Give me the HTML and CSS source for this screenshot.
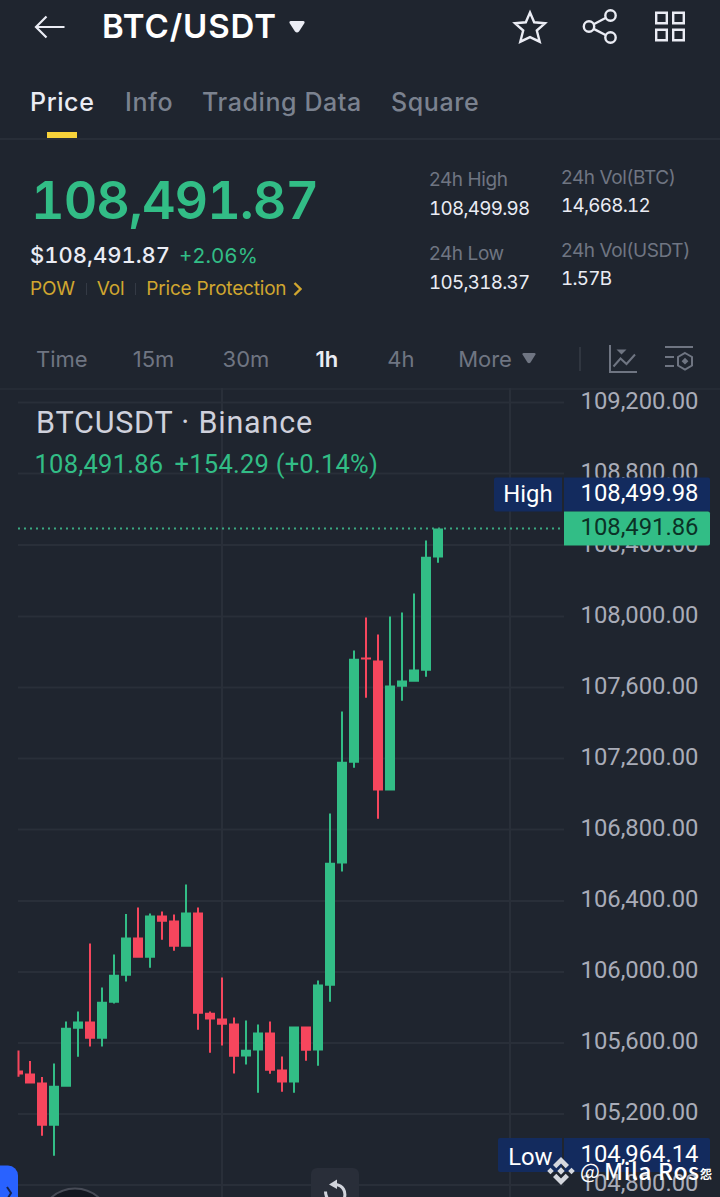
FILE: index.html
```
<!DOCTYPE html>
<html lang="en">
	<head>
		<meta charset="utf-8">
		<meta name="viewport" content="width=device-width, initial-scale=1.0">
		<title>BTC/USDT</title>
		<link rel="stylesheet" href="styles.css">
	</head>
	<body>
		<header class="topbar">
			<svg class="back" width="32" height="24" viewBox="0 0 32 24">
				<path d="M12.500 1.500L2 12l10.500 10.500M2 12h28.500"/>
			</svg>
			<h1>BTC/USDT</h1>
			<svg class="caret" width="16" height="12" viewBox="0 0 16 12">
				<path d="M2 0h12q2 0 1.500 2L10 10.500q-2 2-4 0L.5 2Q0 0 2 0z"/>
			</svg>
			<div class="actions">
				<svg width="36" height="36" viewBox="0 0 36 36">
					<path d="M18 3.500l4.200 9.800 10.800 1-8.200 7.200 2.900 11.200L18 28.100 8.300 32.700l2.900-11.200L3 14.300l10.800-1z"/>
				</svg>
				<svg width="36" height="36" viewBox="0 0 36 36">
					<circle cx="7" cy="17.500" r="5.200"/>
					<circle cx="28.500" cy="6.500" r="5.200"/>
					<circle cx="28.500" cy="28.500" r="5.200"/>
					<path d="M11.700 15.200L24 8.800M11.700 19.900l12.300 6.300"/>
				</svg>
				<svg width="36" height="36" viewBox="0 0 36 36">
					<path d="M4.200 3.700h10.600v10.600H4.200zM21.200 3.700h10.600v10.600H21.200zM4.200 20.700h10.600v10.600H4.200zM21.200 20.700h10.600v10.600H21.200z"/>
				</svg>
			</div>
		</header>
		<nav class="tabs">
			<a class="tab tab-price active">Price</a>
			<a class="tab tab-info">Info</a>
			<a class="tab tab-data">Trading Data</a>
			<a class="tab tab-square">Square</a>
		</nav>
		<section class="ticker">
			<div class="quote">
				<div class="last">108,491.87</div>
				<div class="fiat">$108,491.87 <span class="change">+2.06%</span></div>
				<div class="tags">
					<span class="tag">POW</span>
					<span class="tag">Vol</span>
					<span class="tag protection">Price Protection</span>
					<svg width="9" height="14" viewBox="0 0 9 14"><path d="M1.500 1l6 6-6 6"/></svg>
				</div>
			</div>
			<dl class="stats">
				<dt>24h High</dt>
				<dd>108,499.98</dd>
				<dt>24h Low</dt>
				<dd>105,318.37</dd>
			</dl>
			<dl class="stats volume">
				<dt>24h Vol(BTC)</dt>
				<dd>14,668.12</dd>
				<dt>24h Vol(USDT)</dt>
				<dd>1.57B</dd>
			</dl>
		</section>
		<nav class="intervals">
			<span class="i-time">Time</span>
			<span class="i-15m">15m</span>
			<span class="i-30m">30m</span>
			<span class="i-1h active">1h</span>
			<span class="i-4h">4h</span>
			<span class="i-more">More</span>
			<svg class="more-caret" width="14" height="11" viewBox="0 0 14 11">
				<path d="M1.500 0h11q1.500 0 1 1.500L8.500 9.500q-1.500 1.500-3 0L.5 1.500Q0 0 1.500 0z"/>
			</svg>
			<i class="divider"></i>
			<svg class="tool" width="30" height="30" viewBox="0 0 30 30">
				<path d="M2 1v27h27M5.500 22.500l7-8 6 5.500 8.500-9.500"/>
				<path class="solid" d="M8.500 5.500h10l-5 5z"/>
			</svg>
			<svg class="tool" width="30" height="30" viewBox="0 0 30 30">
				<path d="M1 3h28M1 13h9M1 22h9M21 9l7 4v8.500l-7 4-7-4V13z"/>
				<path class="solid" d="M21 13.800l3.400 3.400-3.400 3.400-3.400-3.400z"/>
			</svg>
		</nav>
		<main>
			<svg class="chart" width="720" height="809" viewBox="0 388 720 809">
				<path class="grid" d="M18 402.500H564M18 473.500H564M18 545H564M18 616.500H564M18 687.500H564M18 758.500H564M18 829.500H564M18 901H564M18 972H564M18 1043H564M18 1114H564M18 1185H564M222 388V1197M510 388V1197"/>

				<!-- candles, 12px apart -->
				<path class="wick up" d="M54 1063.500V1155.700M66 1021.500V1086M78 1011.500V1056.700M102 987.500V1046.500M114 954.500V1003.500M126 914V981.500M150 913.500V967.700M186 884.500V946M246 1020.500V1064.500M258 1024.500V1092.700M294 1027V1092.700M318 980.500V1065.700M330 813.500V1001.700M342 711.500V871.500M354 650.500V767.700M390 616.500V790M402 612.500V700.700M414 593.500V681M426 540.500V676.700M438 529V562.700"/>
				<path class="wick down" d="M18.500 1050.500V1076.700M30 1061V1083M42 1077V1135.700M90 943.500V1046.500M138 907.500V957M162 911.500V939.700M174 914.500V950.700M198 907.500V1029.700M210 1011.500V1052.700M222 977.500V1045.500M234 1017.500V1073.500M270 1021.500V1073.700M282 1056.500V1091.700M306 1027V1060.700M366 617.500V697.700M378 634.500V818.700"/>
				<path class="body up" d="M54 1085.700V1125.700M66 1027.700V1086.700M78 1021.500V1028.700M102 1001.700V1038.700M114 974.700V1002.700M126 937.500V975.700M150 915.500V957.700M186 912.500V946.700M246 1049.700V1056.500M258 1032.500V1050.500M294 1026.500V1082.500M318 984.500V1050.500M330 862.700V985.700M342 761.700V863.500M354 658.700V762.700M390 685.500V790.500M402 680.500V686.700M414 669.500V681.700M426 556.700V670.700M438 528.500V557.500"/>
				<path class="body down" d="M30 1073.500V1083.500M42 1082.500V1125.700M90 1021.500V1038.700M138 937.500V957.700M162 915.500V921.700M174 920.500V946.700M198 912.500V1013.700M210 1012.700V1019.500M222 1018.500V1024.700M234 1023.500V1056.700M270 1032.500V1070.700M282 1069.500V1082.500M306 1026.500V1050.700M366 657.500V659.500M378 660.500V790.500"/>
				<path class="body half down" d="M20.500 1070.500V1074.500"/>
				<path class="last-line" d="M18 528.500H562"/>

				<text class="symbol" x="36" y="432.500">BTCUSDT · Binance</text>
				<text class="ohlc" x="34.500" y="472.500">108,491.86</text>
				<text class="ohlc" x="174.500" y="472.500">+154.29 (+0.14%)</text>

				<g class="axis">
					<text x="698.500" y="409">109,200.00</text>
					<text x="698.500" y="480">108,800.00</text>
					<text x="698.500" y="551.500">108,400.00</text>
					<text x="698.500" y="622.500">108,000.00</text>
					<text x="698.500" y="693.500">107,600.00</text>
					<text x="698.500" y="765">107,200.00</text>
					<text x="698.500" y="836">106,800.00</text>
					<text x="698.500" y="907">106,400.00</text>
					<text x="698.500" y="978">106,000.00</text>
					<text x="698.500" y="1049">105,600.00</text>
					<text x="698.500" y="1120">105,200.00</text>
					<text x="698.500" y="1191">104,800.00</text>
				</g>

				<g class="marks">
					<path class="navy" d="M496 477.500H562V511.500H496q-2 0-2-2v-30q0-2 2-2zM564 477.500H708q2 0 2 2V511.500H564zM500 1138H562V1172H500q-2 0-2-2v-30q0-2 2-2zM564 1138H708q2 0 2 2v30q0 2-2 2H564z"/>
					<path class="green" d="M564 511.500H708q2 0 2 2v30q0 2-2 2H564z"/>
					<text x="552.500" y="501.500">High</text>
					<text x="698.500" y="501">108,499.98</text>
					<text class="now" x="698.500" y="534.500">108,491.86</text>
					<text x="552.500" y="1164.500">Low</text>
					<text x="698.500" y="1161.500">104,964.14</text>
				</g>

				<!-- floating controls cut off by the bottom edge -->
				<rect class="handle" x="-20" y="1165.500" width="38" height="60" rx="10"/>
				<path class="handle-arrow" d="M7 1187l4 6-3 5"/>
				<circle class="knob" cx="75" cy="1224" r="35.500"/>
				<rect class="reset" x="311" y="1168" width="48" height="48" rx="6"/>
				<path class="reset-arrow" d="M336 1184.500c7 1 10 7 8.500 13M325.500 1191.500q0 4 2 7"/>
				<path class="reset-head" d="M329 1184.500l8-5v9.500z"/>

				<g class="watermark">
					<path d="M561 1157l8 8-3.300 3.300-4.700-4.700-4.700 4.700-3.300-3.300zM561 1185l8-8-3.300-3.300-4.700 4.700-4.700-4.700-3.300 3.300zM561 1167.300l3.700 3.700-3.700 3.700-3.700-3.700zM550.500 1167.700l3.300 3.300-3.300 3.300-3.300-3.300zM571.500 1167.700l3.300 3.300-3.300 3.300-3.300-3.300z"/>
					<text class="at" x="580" y="1179">@</text>
					<text x="604" y="1180">Mila Ros</text>
					<text class="tail" x="700" y="1179">怨</text>
				</g>
			</svg>
		</main>
	</body>
</html>
```

FILE: styles.css
```
body {
	margin: 0;
	width: 720px;
	height: 1197px;
	overflow: hidden;
	background: #1f252f;
	color: #eaecf4;
	font-family: Inter, sans-serif;
}

svg {
	display: block;
	flex: none;
	fill: none;
	stroke: #eaecf4;
	stroke-width: 2.4;
}

/* header */
.topbar {
	display: flex;
	align-items: center;
	height: 53px;
	padding: 0 32px 0 34px;
}

.back {
	stroke-width: 2.2;
}

h1 {
	margin: -2px 12px 0 36px;
	width: 175px;
	font-size: 33px;
	font-weight: 600;
	line-height: 50px;
	letter-spacing: 0.9px;
	white-space: nowrap;
	color: #fff;
}

.caret {
	fill: #eaecf4;
	stroke: none;
}

.actions {
	display: flex;
	gap: 34px;
	margin-left: auto;
}

.tabs {
	display: flex;
	height: 85px;
	padding-left: 30px;
	border-bottom: 2px solid #282e38;
	font-size: 25px;
	font-weight: 500;
	line-height: 98px;
	letter-spacing: 0.6px;
	white-space: nowrap;
	color: #7b828f;
}

.tab-price {
	width: 95px;
}

.tab-info {
	width: 77px;
}

.tab-data {
	width: 189px;
}

.tab.active {
	color: #eaecf4;
	background: linear-gradient(#f8d33a, #f8d33a) 17px 79px / 30px 6px no-repeat;
}

/* prices */
.ticker {
	display: flex;
	height: 189px;
}

.quote {
	width: 400px;
	padding: 32px 0 0 30px;
	white-space: nowrap;
}

.last {
	padding-left: 1px;
	font-size: 52px;
	font-weight: 600;
	font-variant-numeric: tabular-nums;
	line-height: 58px;
	letter-spacing: -1px;
	color: #32bd86;
}

.fiat {
	padding-top: 10px;
	font-size: 22px;
	font-weight: 500;
	font-variant-numeric: tabular-nums;
	line-height: 30px;
}

.change {
	margin-left: 3px;
	font-size: 20.500px;
	font-weight: 400;
	color: #32bd86;
}

.tags {
	display: flex;
	align-items: center;
	font-size: 19px;
	line-height: 35px;
	letter-spacing: -0.2px;
	color: #d0a62f;
}

.tag + .tag {
	margin-left: 11px;
	padding-left: 11px;
	background: linear-gradient(#343a45, #343a45) 0 50% / 1px 12px no-repeat;
}

.tags svg {
	margin-left: 7px;
	stroke: #d0a62f;
}

.stats {
	width: 132px;
	margin: 25px 0 0 -1px;
	font-size: 19px;
	line-height: 29px;
	white-space: nowrap;
}

.volume {
	margin: 23px 0 0;
}

.stats dt {
	letter-spacing: -0.4px;
	color: #6f7582;
}

.stats dd {
	margin: 0 0 16px;
	font-size: 18.800px;
	font-variant-numeric: tabular-nums;
	letter-spacing: -0.7px;
}

.volume dd {
	margin-top: -1px;
}

/* interval picker */
.intervals {
	display: flex;
	align-items: center;
	height: 59px;
	padding: 0 0 0 36px;
	border-bottom: 2px solid #252b35;
	font-size: 22px;
	white-space: nowrap;
	color: #6f7582;
}

.intervals .active {
	font-weight: 600;
	color: #eaecf4;
}

.i-time {
	width: 97px;
}

.i-15m {
	width: 90px;
}

.i-30m {
	width: 93px;
}

.i-1h {
	width: 72px;
}

.i-4h {
	width: 71px;
}

.i-more {
	width: 64px;
}

.more-caret {
	fill: #6f7582;
	stroke: none;
}

.divider {
	width: 2px;
	height: 24px;
	margin: 0 27px 0 43px;
	background: #303640;
}

.tool {
	margin-right: 26px;
	stroke: #6f7582;
	stroke-width: 2;
}

.tool .solid {
	fill: #6f7582;
	stroke: none;
}

/* chart */
.chart {
	margin-top: -2px;
	font-family: Roboto, sans-serif;
	font-size: 23.800px;
}

.chart text {
	stroke: none;
}

.grid {
	stroke: #292f39;
	stroke-width: 2;
}

.wick {
	stroke-width: 2;
}

.body {
	stroke-width: 10;
}

.half {
	stroke-width: 5;
}

.up {
	stroke: #32bd86;
}

.down {
	stroke: #f6465d;
}

.last-line {
	stroke: #3aa981;
	stroke-width: 2;
	stroke-dasharray: 2 4;
}

.symbol {
	font-size: 30.500px;
	letter-spacing: 0.800px;
	fill: #cfd1dc;
}

.ohlc {
	font-size: 25.500px;
	letter-spacing: 0.250px;
	fill: #32bd86;
}

.axis text {
	fill: #a9acb8;
	text-anchor: end;
}

.marks text {
	fill: #fff;
	text-anchor: end;
}

.marks .now {
	fill: #0b3226;
}

.navy {
	fill: #132b5e;
	stroke: none;
}

.green {
	fill: #32bd86;
	stroke: none;
}

.handle {
	fill: #2962ff;
	stroke: none;
}

.handle-arrow {
	stroke: #16244d;
	stroke-width: 2;
}

.knob {
	fill: #131720;
	stroke: #474b56;
	stroke-width: 2;
}

.reset {
	fill: #292e39;
	stroke: none;
}

.reset-arrow {
	stroke: #d1d4dc;
	stroke-width: 3;
}

.reset-head {
	fill: #d1d4dc;
	stroke: none;
}

.watermark path {
	fill: #d5d8de;
	stroke: none;
}

.watermark text {
	font-family: "Noto Sans CJK SC", sans-serif;
	font-size: 23px;
	font-weight: 500;
	letter-spacing: 0.600px;
	fill: #fff;
}

.watermark .at {
	font-size: 21px;
	font-weight: 400;
}

.watermark .tail {
	font-size: 12px;
	font-weight: 700;
}
```
